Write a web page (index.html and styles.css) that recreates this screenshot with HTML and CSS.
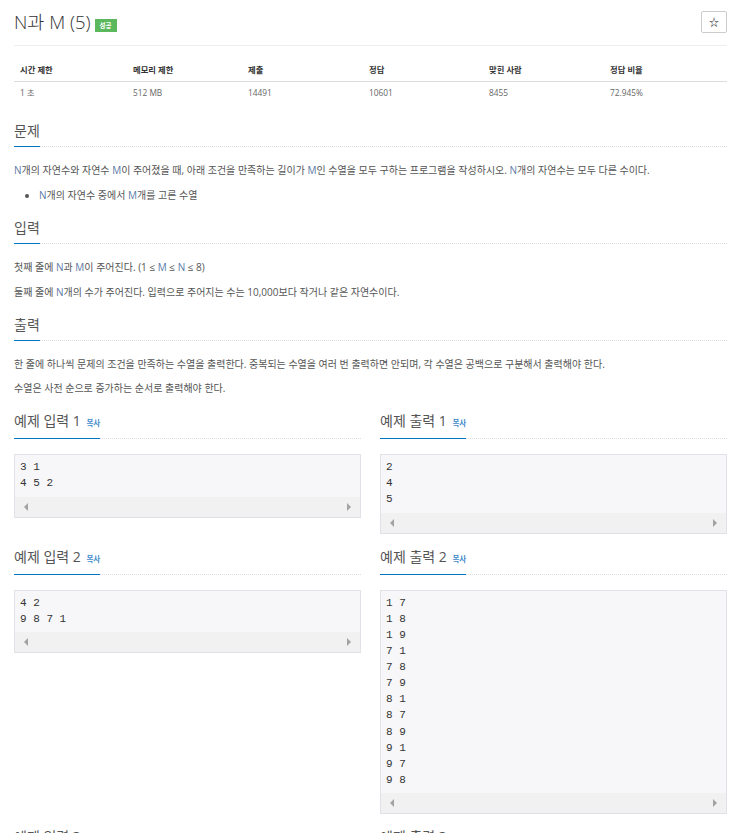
FILE: index.html
```html
<!DOCTYPE html>
<html lang="ko">
<head>
<meta charset="utf-8">
<title>N과 M (5)</title>
<link rel="stylesheet" href="styles.css">
</head>
<body>
<div class="page">
  <div class="title-row">
    <h1 class="title"><span class="title-text">N과 M (5)</span><span class="badge">성공</span></h1>
    <button class="star" type="button">☆</button>
  </div>

  <table class="info">
    <colgroup>
      <col class="c1"><col class="c2"><col class="c3"><col class="c4"><col class="c5"><col class="c6">
    </colgroup>
    <thead>
      <tr><th>시간 제한</th><th>메모리 제한</th><th>제출</th><th>정답</th><th>맞힌 사람</th><th>정답 비율</th></tr>
    </thead>
    <tbody>
      <tr><td>1 초</td><td>512 MB</td><td>14491</td><td>10601</td><td>8455</td><td>72.945%</td></tr>
    </tbody>
  </table>

  <section class="sec">
    <div class="headline"><h2>문제</h2></div>
    <div class="sec-body">
      <p><span class="m">N</span>개의 자연수와 자연수 <span class="m">M</span>이 주어졌을 때, 아래 조건을 만족하는 길이가 <span class="m">M</span>인 수열을 모두 구하는 프로그램을 작성하시오. <span class="m">N</span>개의 자연수는 모두 다른 수이다.</p>
      <ul>
        <li><span class="m">N</span>개의 자연수 중에서 <span class="m">M</span>개를 고른 수열</li>
      </ul>
    </div>
  </section>

  <section class="sec">
    <div class="headline"><h2>입력</h2></div>
    <div class="sec-body">
      <p>첫째 줄에 <span class="m">N</span>과 <span class="m">M</span>이 주어진다. (1 ≤ <span class="m">M</span> ≤ <span class="m">N</span> ≤ 8)</p>
      <p>둘째 줄에 <span class="m">N</span>개의 수가 주어진다. 입력으로 주어지는 수는 10,000보다 작거나 같은 자연수이다.</p>
    </div>
  </section>

  <section class="sec">
    <div class="headline"><h2>출력</h2></div>
    <div class="sec-body">
      <p>한 줄에 하나씩 문제의 조건을 만족하는 수열을 출력한다. 중복되는 수열을 여러 번 출력하면 안되며, 각 수열은 공백으로 구분해서 출력해야 한다.</p>
      <p>수열은 사전 순으로 증가하는 순서로 출력해야 한다.</p>
    </div>
  </section>

  <div class="samples">
    <div class="sample">
      <div class="headline"><h2>예제 입력 1 <a class="copy">복사</a></h2></div>
      <div class="pre-box">
        <pre>3 1
4 5 2</pre>
        <div class="scrollbar"><span class="arr arr-l"></span><span class="arr arr-r"></span></div>
      </div>
    </div>
    <div class="sample">
      <div class="headline"><h2>예제 출력 1 <a class="copy">복사</a></h2></div>
      <div class="pre-box">
        <pre>2
4
5</pre>
        <div class="scrollbar"><span class="arr arr-l"></span><span class="arr arr-r"></span></div>
      </div>
    </div>
    <div class="sample">
      <div class="headline"><h2>예제 입력 2 <a class="copy">복사</a></h2></div>
      <div class="pre-box">
        <pre>4 2
9 8 7 1</pre>
        <div class="scrollbar"><span class="arr arr-l"></span><span class="arr arr-r"></span></div>
      </div>
    </div>
    <div class="sample">
      <div class="headline"><h2>예제 출력 2 <a class="copy">복사</a></h2></div>
      <div class="pre-box">
        <pre>1 7
1 8
1 9
7 1
7 8
7 9
8 1
8 7
8 9
9 1
9 7
9 8</pre>
        <div class="scrollbar"><span class="arr arr-l"></span><span class="arr arr-r"></span></div>
      </div>
    </div>
    <div class="sample">
      <div class="headline"><h2>예제 입력 3 <a class="copy">복사</a></h2></div>
    </div>
    <div class="sample">
      <div class="headline"><h2>예제 출력 3 <a class="copy">복사</a></h2></div>
    </div>
  </div>
</div>
</body>
</html>
```
FILE: styles.css
```css
* { box-sizing: border-box; }
html, body { margin: 0; padding: 0; background: #fff; }
body {
  font-family: "Open Sans", "Noto Sans CJK KR", sans-serif;
  color: #555;
  font-size: 10px;
}
.page {
  width: 748px;
  padding: 0 21px 0 14px;
}

/* title */
.title-row {
  display: flex;
  align-items: center;
  justify-content: space-between;
  margin-top: 9px;
  padding-bottom: 10px;
  border-bottom: 1px solid #eee;
}
.title {
  margin: 0;
  display: flex;
  align-items: center;
  height: 26px;
  font-size: 18.5px;
  font-weight: 300;
  color: #333;
  line-height: 26px;
}
.badge {
  display: inline-block;
  margin-left: 4px;
  margin-top: 7px;
  width: 22px;
  height: 13px;
  background: #5cb85c;
  color: #fff;
  font-size: 6.5px;
  font-weight: 700;
  line-height: 13px;
  text-align: center;
}
.star {
  width: 26px;
  height: 22px;
  padding: 0;
  border: 1px solid #ccc;
  border-radius: 2px;
  background: #fff;
  color: #222;
  font-size: 10px;
  line-height: 20px;
  font-family: "Noto Sans CJK KR", "DejaVu Sans", sans-serif;
}

/* info table */
.info {
  width: 713px;
  margin-top: 12px;
  border-collapse: collapse;
  table-layout: fixed;
  font-size: 8.3px;
}
.c1 { width: 113px; } .c2 { width: 115px; } .c3 { width: 121px; }
.c4 { width: 120px; } .c5 { width: 121px; } .c6 { width: 123px; }
.info th {
  text-align: left;
  font-weight: 700;
  color: #333;
  height: 23px;
  padding: 0 0 0 6px;
  border-bottom: 1px solid #ddd;
}
.info td {
  height: 22px;
  padding: 0 0 0 6px;
  color: #666;
}

/* sections */
.sec { margin-top: 19px; }
.sec + .sec { margin-top: 17px; }
.headline {
  display: flex;
  border-bottom: 1px dotted #ddd;
}
.headline h2 {
  margin: 0 0 -1px 0;
  font-size: 14px;
  font-weight: 400;
  line-height: 18px;
  padding-bottom: 6px;
  color: #555;
  border-bottom: 1px solid #0076c0;
}
.sec-body { padding-top: 16px; }
.sec-body p {
  margin: 0 0 10.5px 0;
  line-height: 14px;
}
.sec-body p:last-child { margin-bottom: 0; }
.sec-body ul {
  margin: 11px 0 0 0;
  padding-left: 25px;
  line-height: 14px;
}
.m { color: #5b7aa6; }

/* samples */
.samples {
  margin-top: 17px;
  display: grid;
  grid-template-columns: 347px 347px;
  column-gap: 19px;
  row-gap: 14px;
  align-items: start;
}
.copy {
  font-size: 7.5px;
  font-weight: 700;
  color: #428bca;
  margin-left: 2px;
}
.pre-box {
  margin-top: 15px;
  border: 1px solid #e1e1e8;
  background: #f7f7f9;
}
.pre-box pre {
  margin: 0;
  padding: 4px 5px 5.5px;
  font-family: "Liberation Mono", monospace;
  font-size: 11px;
  line-height: 16.1px;
  color: #333;
}
.scrollbar {
  height: 20px;
  background: #f1f1f1;
  display: flex;
  align-items: center;
  justify-content: space-between;
  padding: 0 9px;
}
.arr {
  width: 0;
  height: 0;
  border-top: 4px solid transparent;
  border-bottom: 4px solid transparent;
}
.arr-l { border-right: 4px solid #a3a3a3; }
.arr-r { border-left: 4px solid #a3a3a3; }
```
